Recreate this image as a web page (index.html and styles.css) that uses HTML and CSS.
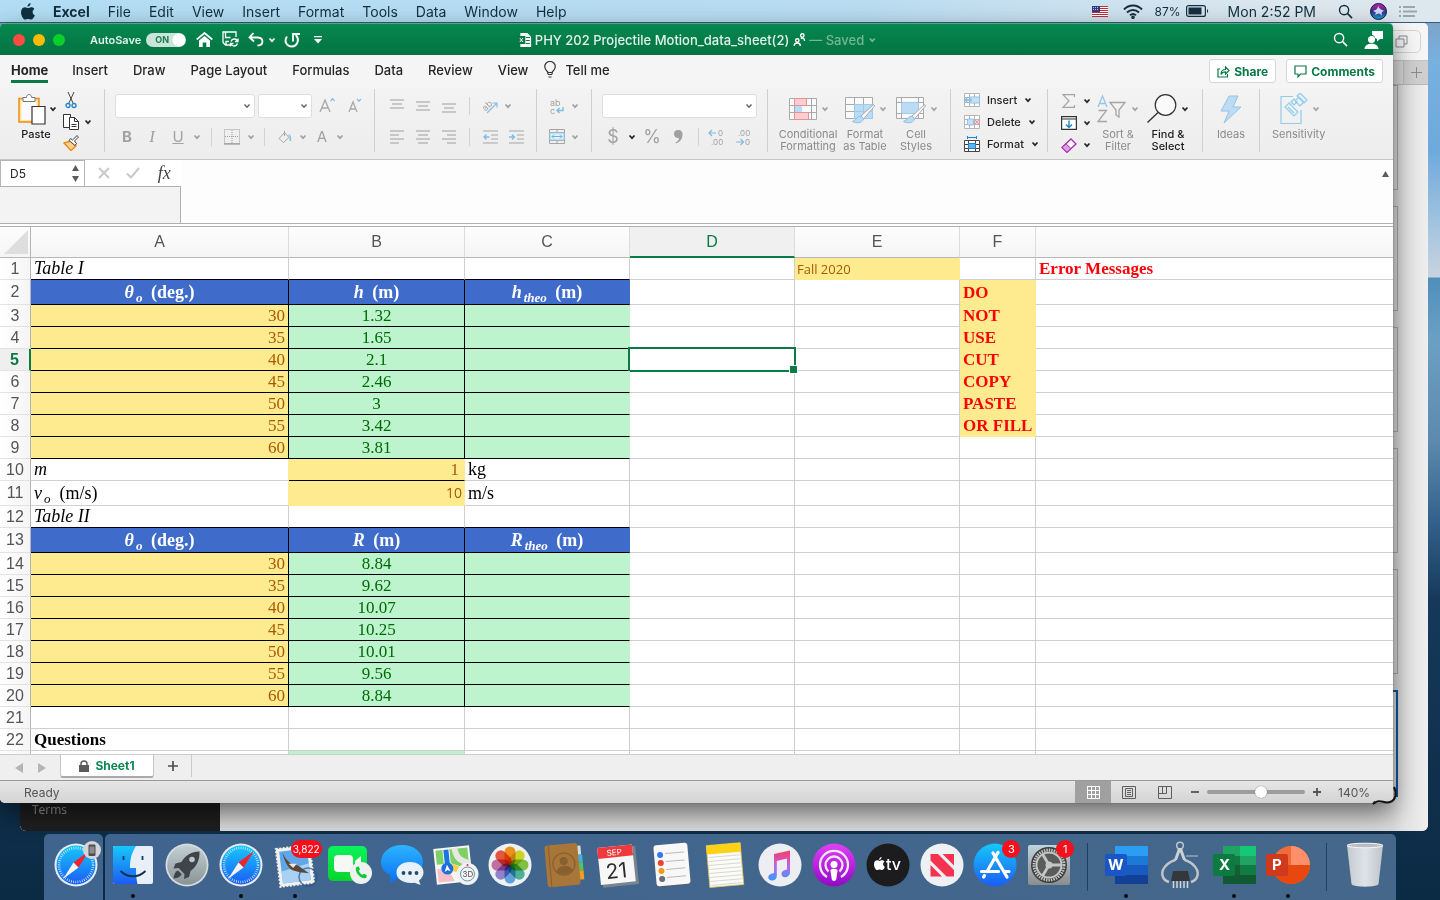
FILE: index.html
```html
<!DOCTYPE html>
<html lang="en">
<head>
<meta charset="utf-8">
<title>PHY 202 Projectile Motion_data_sheet(2)</title>
<link rel="stylesheet" href="styles.css">
</head>
<body>
<svg class="defs" aria-hidden="true">
  <defs>
    <linearGradient id="gBlue" x1="0" y1="0" x2="0" y2="1"><stop offset="0" stop-color="#16c8fb"/><stop offset="1" stop-color="#1b5cf4"/></linearGradient>
    <linearGradient id="gGrey" x1="0" y1="0" x2="0" y2="1"><stop offset="0" stop-color="#c3d0d4"/><stop offset="1" stop-color="#8a9496"/></linearGradient>
    <linearGradient id="gMsg" x1="0" y1="0" x2="0" y2="1"><stop offset="0" stop-color="#2db4ff"/><stop offset="1" stop-color="#0a70f5"/></linearGradient>
    <linearGradient id="gGreen" x1="0" y1="0" x2="0" y2="1"><stop offset="0" stop-color="#0cf25c"/><stop offset="1" stop-color="#07d42c"/></linearGradient>
    <linearGradient id="gPurple" x1="0" y1="0" x2="0" y2="1"><stop offset="0" stop-color="#e040f5"/><stop offset="1" stop-color="#8f0bc4"/></linearGradient>
    <linearGradient id="gMusic" x1="0" y1="0" x2="0" y2="1"><stop offset="0" stop-color="#fb3b63"/><stop offset=".55" stop-color="#b866f0"/><stop offset="1" stop-color="#2f9cfa"/></linearGradient>
    <linearGradient id="gMetal" x1="0" y1="0" x2="0" y2="1"><stop offset="0" stop-color="#bed3dc"/><stop offset="1" stop-color="#8b8d8e"/></linearGradient>
    <linearGradient id="gTrash" x1="0" y1="0" x2="1" y2="0"><stop offset="0" stop-color="#cfd2d6"/><stop offset=".5" stop-color="#eceef0"/><stop offset="1" stop-color="#c9ccd0"/></linearGradient>
    <linearGradient id="gSiri" x1="0" y1="0" x2="0" y2="1"><stop offset="0" stop-color="#d01bb0"/><stop offset=".5" stop-color="#35308f"/><stop offset="1" stop-color="#15a8d8"/></linearGradient>
  </defs>
  <symbol id="chev" viewBox="0 0 8 6"><path d="M1.5 1.5L4 4.2L6.500 1.500" fill="none" stroke="currentColor" stroke-width="1.700"/></symbol>
  <symbol id="apple" viewBox="0 0 14 17"><path d="M9.600 0C9.800 1.800 8.300 3.700 6.500 3.700C6.300 2 7.900.2 9.600 0ZM11.600 8.900c0-1.600 1.100-2.500 1.800-3C12.500 4.500 11.200 4.200 10.200 4.200 8.900 4.200 7.900 5 7.100 5 6.400 5 5.300 4.200 4.200 4.200 1.900 4.200 0 6.100 0 9.300 0 12.700 2.300 16.600 4.300 16.600 5.400 16.600 5.900 15.900 7.200 15.900 8.500 15.900 8.800 16.600 10 16.600c1.700 0 3.200-2.600 3.800-4.400-1.300-.5-2.200-1.700-2.200-3.300Z" fill="currentColor"/></symbol>
  <symbol id="lens" viewBox="0 0 16 16"><circle cx="6.500" cy="6.500" r="4.900" fill="none" stroke="currentColor" stroke-width="1.500"/><path d="M10 10l5 5" stroke="currentColor" stroke-width="1.700"/></symbol>
  <symbol id="al" viewBox="0 0 14 14"><path d="M0 1h14M0 5h9M0 9h14M0 13h9" stroke="currentColor"/></symbol>
  <symbol id="brush" viewBox="0 0 24 22"><path d="M22.500 1.500L10 13l2.500 3L23.500 3Z" fill="#f8f8f8" stroke="#a9a9a9"/><path d="M10 13c-4 0-4 4-8.500 5.500 4 2 9.500 2 11-2.500Z" fill="#bcdcf4" stroke="#8cbde4"/></symbol>
  <symbol id="safari" viewBox="0 0 44 44"><circle cx="22" cy="22" r="21.500" fill="#e8ecef"/><circle cx="22" cy="22" r="19.500" fill="url(#gBlue)"/><circle cx="22" cy="22" r="17" fill="none" stroke="#d9f2ff" stroke-width="2.500" stroke-dasharray=".7 1.500"/><path d="M35 8L24.500 24.500l-5-5Z" fill="#f2222c"/><path d="M9 36L19.500 19.500l5 5Z" fill="#f3f3f3"/></symbol>
</svg>

<header class="menubar">
  <nav class="menus" aria-label="Menu bar">
    <button class="m" aria-label="Apple"><svg width="14" height="17"><use href="#apple"/></svg></button>
    <button class="m app">Excel</button><button class="m">File</button><button class="m">Edit</button><button class="m">View</button><button class="m">Insert</button><button class="m">Format</button><button class="m">Tools</button><button class="m">Data</button><button class="m">Window</button><button class="m">Help</button>
  </nav>
  <div class="tray">
    <svg class="flag" width="16" height="11" viewBox="0 0 16 11"><path d="M0 0h16v11H0z" fill="#fff"/><path d="M0 .5h16M0 2.500h16M0 4.500h16M0 6.500h16M0 8.500h16M0 10.500h16" stroke="#bd2f3f"/><path d="M0 0h8v6H0z" fill="#3b3a78"/><path d="M1 1.500h6M1 3.500h6" stroke="#b9b9dd" stroke-dasharray="1 1"/></svg>
    <svg class="wifi" width="20" height="15" viewBox="0 0 20 15" fill="none" stroke="#17303f" stroke-width="2"><path d="M1 5.500C6 .2 14 .2 19 5.500M4 8.500c3.500-3.500 8.500-3.500 12 0M7 11.300c2-1.800 4-1.800 6 0"/><circle cx="10" cy="13.300" r=".8"/></svg>
    <span class="pct">87%</span>
    <svg class="batt" width="23" height="12" viewBox="0 0 23 12"><rect x=".6" y=".6" width="18.800" height="10.800" rx="2" fill="none" stroke="#17303f" stroke-width="1.200"/><path d="M2.500 2.500h13v7h-13z" fill="#17303f"/><path d="M21 4c1.500.5 1.500 3.500 0 4z" fill="#17303f"/></svg>
    <time class="clock">Mon 2:52 PM</time>
    <button class="t1" aria-label="Search"><svg width="15" height="15"><use href="#lens"/></svg></button>
    <svg class="siri" width="17" height="17" viewBox="0 0 17 17"><circle cx="8.500" cy="8.500" r="8" fill="url(#gSiri)" stroke="#16183c"/><path d="M8 2.500c1 4 5 5 7 5.500-3 .3-4 1-3 5-2-3-3-3.500-7-1 2-3 0-3-2-4C6 7 8 6 8 2.500Z" fill="#e6f4ff" opacity=".85"/></svg>
    <svg class="list" width="19" height="11" viewBox="0 0 19 11"><path d="M0 1h2M0 5.500h2M0 10h2M4 1h12M4 5.500h14M4 10h12" stroke="#99a7b0" stroke-width="1.800"/></svg>
  </div>
</header>

<main class="desktop">
  <section class="back" aria-label="Browser window">
    <div class="back-bar"><span class="pill"><svg width="13" height="13" viewBox="0 0 13 13" fill="none" stroke="#8c8c8c"><path d="M1 4h8v8H1zM4 4V1h8v8H9"/></svg></span></div>
    <div class="back-tabs"><button class="newtab" aria-label="New tab"><svg width="11" height="11" viewBox="0 0 11 11"><path d="M5.500 0v11M0 5.500h11" stroke="#8b8b8b"/></svg></button></div>
    <div class="back-body">
      <div class="side"><a href="#terms">Terms</a></div>
      <div class="cards"><i></i><i></i><i></i><i></i><i></i><i class="on"></i></div>
    </div>
  </section>

  <section class="excel" aria-label="Excel">
    <div class="titlebar">
      <div class="lights"><button aria-label="Close" class="r"></button><button aria-label="Minimize" class="y"></button><button aria-label="Zoom" class="g"></button></div>
      <label class="autosave">AutoSave <span class="sw"><input type="checkbox" checked><span class="on-text">ON</span></span></label>
      <div class="quick">
        <button aria-label="Home"><svg width="17" height="16" viewBox="0 0 17 16"><path d="M.7 7.500L8.500 1l7.800 6.500" fill="none" stroke="#fff" stroke-width="1.700"/><path d="M3 8.500L8.500 4l5.500 4.500V15h-3.700v-4.500H6.700V15H3Z" fill="#fff"/></svg></button>
        <button aria-label="Save"><svg width="17" height="17" viewBox="0 0 17 17" fill="none" stroke="#fff" stroke-width="1.300"><path d="M8 14H3.500L1 11.500V1h13v5M3.500 1v5.500h5M4 14v-3.500h3"/><path d="M9 10.500c1-3 5-3.500 6.500-.5M16 7.500V10.500h-3M15.500 12.500c-1 3-5 3.500-6.500.5M8.500 15.500v-3h3"/></svg></button>
        <button aria-label="Undo"><svg width="16" height="15" viewBox="0 0 16 15" fill="none" stroke="#fff" stroke-width="1.800"><path d="M5.500 1L1.500 5.500l4.500 4M1.500 5.500h8.500c6 0 6 8-.5 8"/></svg></button>
        <button aria-label="Undo list" class="w"><svg width="8" height="6"><use href="#chev"/></svg></button>
        <button aria-label="Repeat"><svg width="16" height="16" viewBox="0 0 16 16" fill="none" stroke="#fff" stroke-width="2"><path d="M3 4.500C-.5 9.500 3 14.500 7.800 14.500c5.500 0 8.200-7 4-11.500"/><path d="M9 9.500V2h7" stroke-width="1.800"/><path d="M7 5.500v5" stroke-width="0"/></svg></button>
        <button aria-label="Customize toolbar"><svg width="8" height="8" viewBox="0 0 8 8"><path d="M0 .7h8" stroke="#fff" stroke-width="1.300"/><path d="M0 3h8L4 7.500Z" fill="#fff"/></svg></button>
      </div>
      <div class="doc">
        <svg width="14" height="14" viewBox="0 0 14 14"><path d="M3 0h7l4 4v10H3z" fill="#fff"/><path d="M8.500 4.500h4M8.500 7.500h4M8.500 10.500h4" stroke="#0a7a45"/><path d="M0 3h8v8H0z" fill="#0a7a45"/><path d="M2.500 5l3.200 4M5.700 5L2.500 9" stroke="#fff"/></svg>
        <span>PHY 202 Projectile Motion_data_sheet(2)</span>
        <svg width="12" height="13" viewBox="0 0 12 13" fill="none" stroke="#fff" stroke-width="1.400"><circle cx="4" cy="7.500" r="1.700"/><path d="M.8 13c0-4 6.200-4 6.200 0"/><circle cx="9" cy="2.500" r="1.700"/><path d="M7.500 5.500c2-1 3.800 0 3.800 2.500"/></svg>
        <span class="saved">— Saved</span><svg class="saved" width="8" height="6"><use href="#chev"/></svg>
      </div>
      <div class="title-right">
        <button aria-label="Search"><svg width="15" height="15"><use href="#lens"/></svg></button>
        <button aria-label="Account"><svg width="19" height="18" viewBox="0 0 19 18" fill="#fff"><circle cx="7.500" cy="8.500" r="3.500"/><path d="M.5 18c0-7 14-7 14 0ZM8 0h11v8h-3l-3 2.500V8l-2-1C11 5 9 4 8 4Z"/></svg></button>
      </div>
    </div>

    <div class="tabs">
      <button class="tab sel">Home</button><button class="tab">Insert</button><button class="tab">Draw</button><button class="tab">Page Layout</button><button class="tab">Formulas</button><button class="tab">Data</button><button class="tab">Review</button><button class="tab">View</button>
      <button class="tab tell"><svg width="12" height="17" viewBox="0 0 12 17" fill="none" stroke="#333" stroke-width="1.200"><path d="M3.800 13v-2C2 9 .7 8 .7 5.500a5.300 5 0 0 1 10.600 0C11.300 8 10 9 8.200 11v2M3.800 11.500h4.400M3.800 13.500h4.400M4.500 16h3"/></svg>Tell me</button>
      <span class="grow"></span>
      <button class="act share"><svg width="13" height="13" viewBox="0 0 13 13" fill="none" stroke="#087a45" stroke-width="1.200"><path d="M3 4H1v8h9.500V9M4 9.500C4 6 6 4.500 8.500 4.500V2L12 5.500 8.500 9V6.800C6.500 6.800 5 7.500 4 9.500Z"/></svg>Share</button>
      <button class="act comm"><svg width="13" height="13" viewBox="0 0 13 13" fill="none" stroke="#087a45" stroke-width="1.200"><path d="M1 1h11v8H6.500L4 12V9H1Z"/></svg>Comments</button>
    </div>

    <div class="ribbon">
      <div class="grp g1">
        <button class="big dark"><span class="pic"><svg width="28" height="32" viewBox="0 0 28 32"><path d="M1 5.500h20V29H1z" fill="#fde3a0" stroke="#f08c10" stroke-width="1.500"/><path d="M3.500 8h15v19h-15z" fill="#fafafa"/><path d="M5 8.500v-4h3.500c0-4 5-4 5 0H17v4Z" fill="#fff" stroke="#777"/><path d="M14 13.500h13V31H14z" fill="#fff" stroke="#333" stroke-width="1.200"/></svg><svg width="8" height="6"><use href="#chev"/></svg></span>Paste</button>
        <div class="stack">
          <button aria-label="Cut"><svg width="12" height="17" viewBox="0 0 12 17" fill="none"><path d="M3 0l5 11M9 0L4 11" stroke="#444"/><circle cx="3" cy="13.500" r="2" stroke="#1a86d0" stroke-width="1.300"/><circle cx="9" cy="13.500" r="2" stroke="#1a86d0" stroke-width="1.300"/></svg></button>
          <button aria-label="Copy" class="dark cp"><svg width="16" height="16" viewBox="0 0 16 16" fill="#fff" stroke="#333"><path d="M.5.500h7v13h-7z"/><path d="M6.500 3.500h5l4 4v8h-9zM11.500 3.500v4h4M8.500 10.500h5M8.500 12.500h5"/></svg><svg width="8" height="6"><use href="#chev"/></svg></button>
          <button aria-label="Format painter"><svg width="16" height="16" viewBox="0 0 16 16"><path d="M1 8l7-2 5 5-5 4.500Z" fill="#fbd28b" stroke="#ef8a12" stroke-width="1.400"/><path d="M6 5.500l6 5 1.500-2-2-2.500L15.500 2 14 .6 9.500 5 7.500 3.500Z" fill="#fff" stroke="#444"/></svg></button>
        </div>
      </div>
      <div class="grp g2">
        <div class="row fonts"><select aria-label="Font" disabled><option></option></select><select aria-label="Font size" disabled><option></option></select>
          <button aria-label="Increase font size"><svg width="17" height="17" viewBox="0 0 17 17" fill="none"><path d="M1 15L6 3l5 12M3 11h6" stroke="#a8a8a8" stroke-width="1.300"/><path d="M11.500 4l2-2.200 2 2.200" stroke="#86bfe4" stroke-width="1.300"/></svg></button>
          <button aria-label="Decrease font size"><svg width="17" height="17" viewBox="0 0 17 17" fill="none"><path d="M3 15L7 5l4 10M4.500 12h5" stroke="#a8a8a8" stroke-width="1.300"/><path d="M11 2l2 2.200L15 2" stroke="#86bfe4" stroke-width="1.300"/></svg></button></div>
        <div class="row style">
          <button class="b">B</button><button class="i">I</button><button class="u">U</button><svg width="8" height="6"><use href="#chev"/></svg><span class="sep"></span>
          <button aria-label="Borders"><svg width="16" height="16" viewBox="0 0 16 16" fill="none" stroke="#9d9d9d"><path d="M.5.500h15v14H.5zM8 1v14M1 7.500h14" stroke-dasharray="1 1"/><path d="M0 15h16" stroke="#888"/></svg></button><svg width="8" height="6"><use href="#chev"/></svg><span class="sep"></span>
          <button aria-label="Fill colour"><svg width="14" height="14" viewBox="0 0 14 14" fill="none" stroke="#a8a8a8"><path d="M1 8.500l5.500-6 4.500 5L5.500 12.500ZM6.500 6V.8"/><path d="M10.500 5c2 0 2 3 1.800 6" stroke="#86bfe4" stroke-width="1.600"/></svg></button><svg width="8" height="6"><use href="#chev"/></svg>
          <button class="fc">A</button><svg width="8" height="6"><use href="#chev"/></svg>
        </div>
      </div>
      <div class="grp g3">
        <div class="row al"><svg width="14" height="14" viewBox="0 0 14 14"><path d="M0 1h14M2 5h10M0 9h14" stroke="currentColor"/></svg><svg width="14" height="14" viewBox="0 0 14 14"><path d="M0 3h14M2 7h10M0 11h14" stroke="currentColor"/></svg><svg width="14" height="14" viewBox="0 0 14 14"><path d="M0 5h14M2 9h10M0 13h14" stroke="currentColor"/></svg><span class="sep"></span>
          <svg width="18" height="18" viewBox="0 0 18 18"><text x="1" y="12" font-size="9" fill="#a2a2a2" transform="rotate(-45 6 9)">ab</text><path d="M6 16L16 6M11.500 6H16v4.500" fill="none" stroke="#86bfe4" stroke-width="1.200"/></svg><svg class="start" width="8" height="6"><use href="#chev"/></svg></div>
        <div class="row al"><svg width="14" height="14"><use href="#al"/></svg><svg width="14" height="14" viewBox="0 0 14 14"><path d="M0 1h14M2 5h10M0 9h14M2 13h10" stroke="currentColor"/></svg><svg width="14" height="14" viewBox="0 0 14 14"><path d="M0 1h14M5 5h9M0 9h14M5 13h9" stroke="currentColor"/></svg><span class="sep"></span>
          <svg width="15" height="14" viewBox="0 0 15 14" fill="none"><path d="M0 1h15M8 5h7M8 9h7M0 13h15" stroke="#a5a5a5"/><path d="M6.500 7H1M3.500 4.500L1 7l2.500 2.500" stroke="#7ebbe3" stroke-width="1.300"/></svg><svg width="15" height="14" viewBox="0 0 15 14" fill="none"><path d="M0 1h15M8 5h7M8 9h7M0 13h15" stroke="#a5a5a5"/><path d="M0 7h5.500M3 4.500L5.500 7 3 9.500" stroke="#7ebbe3" stroke-width="1.300"/></svg></div>
      </div>
      <div class="grp g4">
        <div class="row"><svg width="16" height="22" viewBox="0 0 16 22"><text x="1" y="11" font-size="9" fill="#a2a2a2">ab</text><text x="1" y="19" font-size="9" fill="#a2a2a2" class="tight">c</text><path d="M14 12v3.500H8M10.500 13L8 15.500l2.500 2.500" fill="none" stroke="#7ebbe3" stroke-width="1.300"/></svg><svg width="8" height="6"><use href="#chev"/></svg></div>
        <div class="row"><svg width="16" height="15" viewBox="0 0 16 15" fill="none"><path d="M.5.500h15v14H.5zM.5 3.500h15M.5 11.500h15M8 .5v3M8 11.500v3" stroke="#a5a5a5"/><path d="M1 4h14v7H1z" fill="#e2f1fb" stroke="#9acbe9"/><path d="M3 7.500h10M5 5.500l-2 2 2 2M11 5.500l2 2-2 2" stroke="#6db3df"/></svg><svg width="8" height="6"><use href="#chev"/></svg></div>
      </div>
      <div class="grp g5">
        <div class="row"><select aria-label="Number format" disabled><option></option></select></div>
        <div class="row num"><button>$</button><svg class="dk" width="8" height="6"><use href="#chev"/></svg><button>%</button><button class="comma" aria-label="Comma style"><svg width="9" height="14" viewBox="0 0 9 14"><path d="M4 0a4 4 0 0 1 4.500 4.500C8.500 9 6 12 2 13.500l-.5-1C4 11 5 9.500 5 8 2 8.500 0 6.500 0 4A4 4 0 0 1 4 0Z" fill="#a0a0a0"/></svg></button><span class="sep"></span>
          <svg width="18" height="22" viewBox="0 0 18 22"><text x="10" y="10" font-size="8" fill="#a0a0a0">0</text><text x="3" y="19" font-size="8" fill="#a0a0a0">.00</text><path d="M8 7H1M4 4L1 7l3 3" fill="none" stroke="#7ebbe3" stroke-width="1.200"/></svg>
          <svg width="18" height="22" viewBox="0 0 18 22"><text x="3" y="10" font-size="8" fill="#a0a0a0">.00</text><text x="10" y="19" font-size="8" fill="#a0a0a0">0</text><path d="M1 16h7M5.500 13l3 3-3 3" fill="none" stroke="#7ebbe3" stroke-width="1.200"/></svg></div>
      </div>
      <div class="grp g6">
        <button class="big"><span class="pic"><svg width="30" height="28" viewBox="0 0 30 28"><path d="M1.500 3.500h27v21h-27zM1.500 10.500h27M1.500 17.500h27M6.500 3.500v21M23.500 3.500v21" fill="#fafafa" stroke="#a9a9a9"/><path d="M6.500 3.500h12v7h-12zM6.500 17.500h14v7h-14z" fill="#f9cfd1" stroke="#ee8f93"/><path d="M7 11h7v6H7z" fill="#bcdcf4"/></svg><svg width="8" height="6"><use href="#chev"/></svg></span>Conditional<br>Formatting</button>
        <button class="big"><span class="pic"><svg width="32" height="30" viewBox="0 0 32 30"><path d="M1.500 3.500h27v21h-27zM1.500 10.500h27M1.500 17.500h27M10.500 3.500v21M19.500 3.500v21" fill="#fafafa" stroke="#a9a9a9"/><path d="M10.500 10.500h18v14h-18z" fill="#bcdcf4" stroke="#9ccbec"/><path d="M10.500 17.500h18M19.500 10v14" stroke="#9ccbec"/><use href="#brush" x="7" y="9" width="24" height="22"/></svg><svg width="8" height="6"><use href="#chev"/></svg></span>Format<br>as Table</button>
        <button class="big"><span class="pic"><svg width="32" height="30" viewBox="0 0 32 30"><path d="M1.500 3.500h27v21h-27zM1.500 8.500h27M1.500 19.500h27M6.500 3.500v21M23.500 3.500v21" fill="#fafafa" stroke="#a9a9a9"/><path d="M6.500 8.500h17v11h-17z" fill="#bcdcf4" stroke="#9ccbec"/><use href="#brush" x="7" y="9" width="24" height="22"/></svg><svg width="8" height="6"><use href="#chev"/></svg></span>Cell<br>Styles</button>
      </div>
      <div class="grp g7">
        <button class="line"><svg width="16" height="14" viewBox="0 0 16 14"><path d="M.5.500h15v13H.5zM.5 4.500h15M.5 9.500h15M5.500.5v13M10.500.5v13" fill="#fff" stroke="#b5b5b5"/><path d="M6 4h9.500v6H6z" fill="#c5e1f5" stroke="#8fc3e8"/><path d="M8 7H1M4 4L1 7l3 3" fill="none" stroke="#7ebbe3" stroke-width="1.300"/></svg>Insert<svg width="8" height="6"><use href="#chev"/></svg></button>
        <button class="line"><svg width="16" height="14" viewBox="0 0 16 14"><path d="M.5.500h15v13H.5zM.5 4.500h15M.5 9.500h15M5.500.5v13M10.500.5v13" fill="#fff" stroke="#b5b5b5"/><path d="M3.500 4h6v6h-6z" fill="#c5e1f5" stroke="#8fc3e8"/><path d="M10.500 4.500l5 5M15.500 4.500l-5 5" stroke="#f09a9e" stroke-width="1.300"/></svg>Delete<svg width="8" height="6"><use href="#chev"/></svg></button>
        <button class="line"><svg width="16" height="16" viewBox="0 0 16 16"><path d="M.5 4.500h15v11H.5zM.5 8.500h15M.5 12.500h15M4.500 4.500v11M11.500 4.500v11" fill="#fff" stroke="#444"/><path d="M4.500 7.500h7v5h-7z" fill="#5db4ef" stroke="#1a86d0"/><path d="M3.500 1.500h9M3.500 0v3M12.500 0v3" stroke="#1a86d0"/></svg>Format<svg width="8" height="6"><use href="#chev"/></svg></button>
      </div>
      <div class="grp g8">
        <div class="stack two">
          <button aria-label="AutoSum"><svg width="16" height="14" viewBox="0 0 16 14"><path d="M13.500 3V.7H2L8 7l-6 6.300h11.500V11" fill="none" stroke="#a5a5a5" stroke-width="1.200"/></svg><svg width="8" height="6"><use href="#chev"/></svg></button>
          <button aria-label="Fill"><svg width="16" height="14" viewBox="0 0 16 14"><path d="M.6.600h14.800v12.800H.6zM.6 3h14.800" fill="#fff" stroke="#333" stroke-width="1.200"/><path d="M8 4.500V11M5 8.500l3 3 3-3" fill="none" stroke="#1a86d0" stroke-width="1.400"/></svg><svg width="8" height="6"><use href="#chev"/></svg></button>
          <button aria-label="Clear"><svg width="16" height="15" viewBox="0 0 16 15"><path d="M1 9.500L10 1l5 5-9 8.300Z" fill="#fff" stroke="#a42cae" stroke-width="1.300"/><path d="M1 9.500L5 5.800l5 4.800-4 3.700Z" fill="#dc9fe0" stroke="#a42cae"/></svg><svg width="8" height="6"><use href="#chev"/></svg></button>
        </div>
        <button class="big"><span class="pic"><svg width="30" height="30" viewBox="0 0 30 30" fill="none"><path d="M1 13L5.500 2 10 13M2.700 9.500h5.700" stroke="#94c8ea" stroke-width="1.300"/><path d="M1.500 16.500h8l-8.500 11h9" stroke="#a5a5a5" stroke-width="1.300"/><path d="M13 8.500h15l-6 7.500v7l-3-2v-5Z" stroke="#a5a5a5" stroke-width="1.300"/></svg><svg width="8" height="6"><use href="#chev"/></svg></span>Sort &amp;<br>Filter</button>
        <button class="big dark"><span class="pic"><svg width="30" height="30" viewBox="0 0 30 30"><circle cx="18.500" cy="11" r="10.300" fill="#fafafa" stroke="#333" stroke-width="1.200"/><path d="M11 18.500L.5 28.500" stroke="#333" stroke-width="1.400"/></svg><svg width="8" height="6"><use href="#chev"/></svg></span>Find &amp;<br>Select</button>
      </div>
      <div class="grp g9"><button class="big"><span class="pic"><svg width="24" height="29" viewBox="0 0 24 29"><path d="M10 1h9l-5 11h8L5 28l5-12H2Z" fill="#bcdcf4" stroke="#94c2e8"/></svg></span>Ideas</button></div>
      <div class="grp g10"><button class="big"><span class="pic"><svg width="28" height="32" viewBox="0 0 28 32" fill="none" stroke="#93cbe9" stroke-width="1.200"><path d="M13 3.500H1v27h20V17"/><path d="M5 14l4-4 9 9-4 4ZM8 14l6 6M15 8l5 5 4-4-5-5ZM17 3l3-3 7 7-3 3ZM11 9l3 3 3-3-3-3Z" fill="#e5f3fb"/></svg><svg width="8" height="6"><use href="#chev"/></svg></span>Sensitivity</button></div>
    </div>

    <div class="formula">
      <div class="fleft">
        <div class="frow">
          <div class="namebox"><input value="D5" aria-label="Name box"><svg width="7" height="17" viewBox="0 0 7 17"><path d="M0 6L3.500 0 7 6ZM0 11h7l-3.500 6Z" fill="#5c5c5c"/></svg></div>
          <button aria-label="Cancel"><svg width="12" height="12" viewBox="0 0 12 12"><path d="M1 1l10 10M11 1L1 11" stroke="#c9c9c9" stroke-width="2"/></svg></button>
          <button aria-label="Enter"><svg width="14" height="12" viewBox="0 0 14 12"><path d="M1 6.500L5 10.500 13 1" fill="none" stroke="#c9c9c9" stroke-width="2"/></svg></button>
          <button class="fx">fx</button>
        </div>
        <div class="fblank"></div>
      </div>
      <textarea aria-label="Formula"></textarea>
      <button class="fold" aria-label="Collapse formula bar"><svg width="7" height="6" viewBox="0 0 7 6"><path d="M0 6L3.500 0 7 6Z" fill="#5c5c5c"/></svg></button>
    </div>

    <div class="sheet">
      <table>
        <colgroup><col class="ch"><col class="ca"><col class="cb"><col class="cc"><col class="cc"><col class="cc"><col class="cf"><col></colgroup>
        <thead><tr><th><svg width="24" height="24" viewBox="0 0 24 24"><path d="M24 0v24H0Z" fill="#dedede"/></svg></th><th>A</th><th>B</th><th>C</th><th class="cur">D</th><th>E</th><th>F</th><th></th></tr></thead>
        <tbody>
          <tr class="over"><th>1</th><td class="it">Table I</td><td></td><td></td><td></td><td class="fall">Fall 2020</td><td></td><td class="err">Error Messages</td></tr>
          <tr class="tall head"><th>2</th><td><em>θ<sub>o</sub></em> (deg.)</td><td><em>h</em> (m)</td><td><em>h<sub>theo</sub></em> (m)</td><td></td><td></td><td class="warn">DO</td><td></td></tr>
          <tr class="data"><th>3</th><td>30</td><td>1.32</td><td></td><td></td><td></td><td class="warn">NOT</td><td></td></tr>
          <tr class="data"><th>4</th><td>35</td><td>1.65</td><td></td><td></td><td></td><td class="warn">USE</td><td></td></tr>
          <tr class="data"><th class="cur">5</th><td>40</td><td>2.1</td><td></td><td class="active"></td><td></td><td class="warn">CUT</td><td></td></tr>
          <tr class="data"><th>6</th><td>45</td><td>2.46</td><td></td><td></td><td></td><td class="warn">COPY</td><td></td></tr>
          <tr class="data"><th>7</th><td>50</td><td>3</td><td></td><td></td><td></td><td class="warn">PASTE</td><td></td></tr>
          <tr class="data"><th>8</th><td>55</td><td>3.42</td><td></td><td></td><td></td><td class="warn">OR FILL</td><td></td></tr>
          <tr class="data"><th>9</th><td>60</td><td>3.81</td><td></td><td></td><td></td><td></td><td></td></tr>
          <tr><th>10</th><td class="it nr">m</td><td class="inp line-b one">1</td><td class="unit">kg</td><td></td><td></td><td></td><td></td></tr>
          <tr class="tall"><th>11</th><td class="unit nr"><em>v<sub>o</sub></em>&nbsp; (m/s)</td><td class="inp sans">10</td><td class="unit">m/s</td><td></td><td></td><td></td><td></td></tr>
          <tr class="over"><th>12</th><td class="it">Table II</td><td></td><td></td><td></td><td></td><td></td><td></td></tr>
          <tr class="tall head"><th>13</th><td><em>θ<sub>o</sub></em> (deg.)</td><td><em>R</em> (m)</td><td><em>R<sub>theo</sub></em> (m)</td><td></td><td></td><td></td><td></td></tr>
          <tr class="data"><th>14</th><td>30</td><td>8.84</td><td></td><td></td><td></td><td></td><td></td></tr>
          <tr class="data"><th>15</th><td>35</td><td>9.62</td><td></td><td></td><td></td><td></td><td></td></tr>
          <tr class="data"><th>16</th><td>40</td><td>10.07</td><td></td><td></td><td></td><td></td><td></td></tr>
          <tr class="data"><th>17</th><td>45</td><td>10.25</td><td></td><td></td><td></td><td></td><td></td></tr>
          <tr class="data"><th>18</th><td>50</td><td>10.01</td><td></td><td></td><td></td><td></td><td></td></tr>
          <tr class="data"><th>19</th><td>55</td><td>9.56</td><td></td><td></td><td></td><td></td><td></td></tr>
          <tr class="data"><th>20</th><td>60</td><td>8.84</td><td></td><td></td><td></td><td></td><td></td></tr>
          <tr><th>21</th><td></td><td></td><td></td><td></td><td></td><td></td><td></td></tr>
          <tr><th>22</th><td class="q">Questions</td><td></td><td></td><td></td><td></td><td></td><td></td></tr>
          <tr><th></th><td></td><td class="ans"></td><td></td><td></td><td></td><td></td><td></td></tr>
        </tbody>
      </table>
    </div>

    <div class="sheetbar">
      <button class="arr" aria-label="Previous sheet"><svg width="8" height="10" viewBox="0 0 8 10"><path d="M8 0v10L0 5Z" fill="#b4b4b4"/></svg></button>
      <button class="arr" aria-label="Next sheet"><svg width="8" height="10" viewBox="0 0 8 10"><path d="M0 0v10l8-5Z" fill="#b4b4b4"/></svg></button>
      <button class="stab"><svg width="10" height="12" viewBox="0 0 10 12"><path d="M0 5h10v7H0z" fill="#5c5c5c"/><path d="M2 5.500V4c0-4 6-4 6 0v1.500" fill="none" stroke="#5c5c5c" stroke-width="1.500"/></svg>Sheet1</button>
      <button class="add" aria-label="New sheet"><svg width="10" height="10" viewBox="0 0 10 10"><path d="M5 0v10M0 5h10" stroke="#4e4e4e" stroke-width="1.700"/></svg></button>
    </div>
    <footer class="status">
      <span>Ready</span><span class="grow"></span>
      <button class="view sel" aria-label="Normal view"><svg width="13" height="13" viewBox="0 0 13 13"><path d="M0 0h13v13H0z" fill="#fff"/><path d="M1 1h3v3H1zM5 1h3v3H5zM9 1h3v3H9zM1 5h3v3H1zM5 5h3v3H5zM9 5h3v3H9zM1 9h3v3H1zM5 9h3v3H5zM9 9h3v3H9z" fill="#9f9f9f"/></svg></button>
      <button class="view" aria-label="Page layout view"><svg width="14" height="13" viewBox="0 0 14 13" fill="none" stroke="#5f5f5f"><path d="M.5.500h13v12H.5zM3.500 2.500h7v8h-7zM5 4.500h4M5 6.500h4M5 8.500h4"/></svg></button>
      <button class="view" aria-label="Page break view"><svg width="14" height="13" viewBox="0 0 14 13" fill="none" stroke="#5f5f5f"><path d="M.5.500h13v12H.5zM.5 7.500h8v-7M4.500.5v7"/></svg></button>
      <button class="zb" aria-label="Zoom out"><svg width="8" height="8" viewBox="0 0 8 8"><path d="M0 4h8" stroke="#555" stroke-width="1.800"/></svg></button>
      <input type="range" min="0" max="100" value="56" aria-label="Zoom">
      <button class="zb" aria-label="Zoom in"><svg width="8" height="8" viewBox="0 0 8 8"><path d="M0 4h8M4 0v8" stroke="#555" stroke-width="1.800"/></svg></button>
      <span class="zoom">140%</span>
    </footer>
  </section>
  <svg class="grip" width="26" height="20" viewBox="0 0 26 20"><path d="M22 1c3 6 2 13-4 15-6 2-9-3-14 0l-3 2 2-2.500" fill="none" stroke="#111" stroke-width="2"/></svg>
</main>

<nav class="dock" aria-label="Dock">
  <div class="shelf handoff"><button class="d" aria-label="Safari from iPhone"><svg width="56" height="48" viewBox="0 0 56 48"><use href="#safari" x="8" y="2" width="44" height="44"/><circle cx="46" cy="9" r="9" fill="#d4d6d9"/><rect x="42.500" y="3.500" width="7" height="11.500" rx="1.200" fill="#4e4e50"/><path d="M43.500 5.500h5v7h-5z" fill="#8b8b8d"/></svg></button></div>
  <div class="shelf main">
    <div class="apps a18">
      <button class="d run" aria-label="Finder"><svg width="44" height="44" viewBox="0 0 44 44"><rect x="2" y="3" width="40" height="38" rx="2" fill="#e9eff8"/><path d="M4 3h21c-5 8-6 14-6 22h6c0 6 .3 11 1.500 16H4a2 2 0 0 1-2-2V5a2 2 0 0 1 2-2Z" fill="url(#gBlue)"/><path d="M12.500 13v4M31.500 13v4" stroke="#173a5c" stroke-width="1.800"/><path d="M9.500 28c7 7 18 7 25 0" fill="none" stroke="#12304f" stroke-width="1.800"/></svg></button>
      <button class="d" aria-label="Launchpad"><svg width="44" height="44" viewBox="0 0 44 44"><circle cx="22" cy="22" r="21.500" fill="#d9dcdc"/><circle cx="22" cy="22" r="19.800" fill="url(#gGrey)"/><path d="M34.500 8.500C26 8.500 20 13 16.500 19l-6 1.500-2 5 5-.5 6 6-.5 5 5-2 1.500-6C31 24.500 35 17 34.500 8.500Z" fill="#3e444a"/><circle cx="27" cy="16.500" r="2.800" fill="#bcc6c9"/><path d="M13 27.500c-3 1-4 4-4.500 8 4-.5 7-1.500 8-4.500Z" fill="#3e444a"/></svg></button>
      <button class="d run" aria-label="Safari"><svg width="44" height="44"><use href="#safari"/></svg></button>
      <button class="d run" aria-label="Mail"><svg width="46" height="46" viewBox="0 0 46 46"><g transform="rotate(-7 22 24)"><rect x="6" y="5" width="34" height="38" fill="#f1f1ee" stroke="#f1f1ee" stroke-width="2" stroke-dasharray="2 1.500"/><rect x="9" y="8" width="28" height="32" fill="#5fa7e8"/><path d="M9 28l28-5v17H9Z" fill="#a9d1f3"/><path d="M12 9c2 7 5 10 8 13l6 2 10 9-9-2-7-3c-3-1-7-9-8-19Z" fill="#5f4632"/><path d="M17 21l8 1-4 4Z" fill="#f0e8dc"/></g><circle cx="36" cy="35" r="9" fill="none" stroke="#2c5583" stroke-width="1.500" opacity=".7"/></svg><span class="badge wide">3,822</span></button>
      <button class="d" aria-label="FaceTime"><svg width="46" height="44" viewBox="0 0 46 44"><rect x="2" y="3" width="39" height="35" rx="5" fill="url(#gGreen)"/><rect x="8" y="12" width="19" height="17" rx="4" fill="#f5f8f5"/><path d="M29 18l6-5v14l-6-4Z" fill="#f5f8f5"/><circle cx="35" cy="30" r="11" fill="#eef1ef"/><path d="M30 24.500c-1.500 5 5 12 10 10.500l1-2.500-3-1.800-1.700 1c-2-1-3-2.500-3.500-4l1.200-1.400-1.500-3Z" fill="#0fc83b"/></svg></button>
      <button class="d" aria-label="Messages"><svg width="44" height="44" viewBox="0 0 44 44"><path d="M22 2c12 0 21 7.500 21 17S34 36 22 36c-2.500 0-4 0-6-.8-2 2.500-4 4.300-7 4.800 1.500-2.500 2-5 1.500-7.500C4.500 29.500 1 25 1 19 1 9.500 10 2 22 2Z" fill="url(#gMsg)"/><path d="M30 19c8 0 13.500 4.500 13.500 10.500 0 3.500-2 6-4.500 8l1.500 4.500-6-2.300c-12 1.300-18-4.200-18-10.200S22 19 30 19Z" fill="#e9f1f8"/><g fill="#22486e"><circle cx="23.500" cy="30" r="1.900"/><circle cx="30" cy="30" r="1.900"/><circle cx="36.500" cy="30" r="1.900"/></g></svg></button>
      <button class="d" aria-label="Maps"><svg width="46" height="44" viewBox="0 0 46 44"><g transform="rotate(-6 20 22)"><path d="M2 4h36v36H2z" fill="#f6f6f2"/><path d="M4 6h7v14H4z" fill="#7fd069"/><path d="M18 6h18v22L18 20Z" fill="#7fd069"/><path d="M23 5c1 11 5 14 14 17" fill="none" stroke="#e8e8e3" stroke-width="6"/><path d="M4 24l12 4 4 10H4Z" fill="#f6bfc7"/><path d="M12 6h5v18h-5z" fill="#1976e2"/><path d="M17 20l20 9-3 4-18-6Z" fill="#f9cf4b"/><circle cx="14" cy="25" r="6" fill="#1a70df"/><path d="M14 21l3 7-3-1.500-3 1.500Z" fill="#fff"/></g><circle cx="34.500" cy="31" r="11" fill="#f1f2f3"/><circle cx="34.500" cy="31" r="7" fill="none" stroke="#6c97b1"/><text x="29.500" y="34" font-size="8" fill="#555">3D</text><circle cx="34.500" cy="22" r="1" fill="#e8322c"/></svg></button>
      <button class="d" aria-label="Photos"><svg width="44" height="44" viewBox="0 0 44 44"><circle cx="22" cy="22" r="21.500" fill="#eef1f2"/><g class="petals"><rect x="16.500" y="3.500" width="11" height="18.500" rx="5.500" fill="#f89b1c"/><rect x="16.500" y="3.500" width="11" height="18.500" rx="5.500" fill="#dbe028" transform="rotate(45 22 22)"/><rect x="16.500" y="3.500" width="11" height="18.500" rx="5.500" fill="#8bcb46" transform="rotate(90 22 22)"/><rect x="16.500" y="3.500" width="11" height="18.500" rx="5.500" fill="#52b9a5" transform="rotate(135 22 22)"/><rect x="16.500" y="3.500" width="11" height="18.500" rx="5.500" fill="#66abe8" transform="rotate(180 22 22)"/><rect x="16.500" y="3.500" width="11" height="18.500" rx="5.500" fill="#9c8ad4" transform="rotate(225 22 22)"/><rect x="16.500" y="3.500" width="11" height="18.500" rx="5.500" fill="#cf74ad" transform="rotate(270 22 22)"/><rect x="16.500" y="3.500" width="11" height="18.500" rx="5.500" fill="#f45c42" transform="rotate(315 22 22)"/></g></svg></button>
      <button class="d" aria-label="Contacts"><svg width="44" height="46" viewBox="0 0 44 46"><g transform="rotate(-5 22 23)"><path d="M34 5h6v9h-6z" fill="#d9dee0"/><path d="M35 14h6v8h-6z" fill="#3fb2e0"/><path d="M35 22h6v8h-6z" fill="#52c463"/><path d="M35 30h6v9h-6z" fill="#ef9e20"/><rect x="4" y="2" width="33" height="42" rx="3" fill="#a9763a"/><path d="M8 2v42" stroke="#8c5d29"/><circle cx="22" cy="22" r="11" fill="none" stroke="#87602f" stroke-width="1.300"/><circle cx="22" cy="19" r="4" fill="#87602f"/><path d="M14 29c2-7 14-7 16 0-4 4-12 4-16 0Z" fill="#87602f"/></g></svg></button>
      <button class="d" aria-label="Calendar"><svg width="44" height="46" viewBox="0 0 44 46"><g transform="rotate(-6 22 23)"><path d="M5 6h36v38H5z" fill="#76858f"/><path d="M3 4h35v37H3z" fill="#f7f7f7"/><path d="M3 4h35v11H3z" fill="#ef3a3d"/><text x="12" y="13" font-size="8" fill="#fff">SEP</text><text x="9" y="36" font-size="21" fill="#2c2c2c">21</text></g></svg></button>
      <button class="d" aria-label="Reminders"><svg width="44" height="46" viewBox="0 0 44 46"><g transform="rotate(-5 22 23)"><rect x="5" y="3" width="34" height="41" rx="3" fill="#54606b"/><rect x="5" y="2" width="34" height="41" rx="3" fill="#f8f8f8"/><path d="M16 11h19M16 19h19M16 27h19M16 35h19" stroke="#bababa"/><circle cx="11" cy="12" r="3" fill="#3478f6"/><circle cx="11" cy="20" r="3" fill="#eb4237"/><circle cx="11" cy="28" r="3" fill="#f59a1f"/><circle cx="11" cy="36" r="3" fill="#666d74"/></g></svg></button>
      <button class="d" aria-label="Notes"><svg width="44" height="46" viewBox="0 0 44 46"><g transform="rotate(-5 22 23)"><path d="M4 2h34v42H4z" fill="#fbfbf7" stroke="#dcc253" stroke-width=".8"/><path d="M4 2h34v9H4z" fill="#fcd116"/><path d="M5 14h32M5 18h32M5 22h32M5 26h32M5 30h32M5 34h32M5 38h32M5 42h32" stroke="#d6d8d8"/></g></svg></button>
      <button class="d" aria-label="Music"><svg width="44" height="44" viewBox="0 0 44 44"><circle cx="22" cy="22" r="21.500" fill="#eceef2"/><path d="M16 11l16-3.500v22c0 5.500-8.500 6.500-8.500 1.500 0-3.500 3.500-3.800 5.500-4.500V15.500L18.800 18v15c0 5.500-8.500 6-8.500 1.500 0-3.500 3.500-4 5.700-4.500Z" fill="url(#gMusic)"/></svg></button>
      <button class="d" aria-label="Podcasts"><svg width="44" height="44" viewBox="0 0 44 44"><circle cx="22" cy="22" r="21.500" fill="url(#gPurple)"/><g fill="none" stroke="#f6e6fb" stroke-width="2.300"><path d="M15 34a14 14 0 1 1 14 0"/><path d="M16.500 28.500a8.500 8.500 0 1 1 11 0"/></g><circle cx="22" cy="21.500" r="3.500" fill="#fff"/><path d="M18.500 27.500c0-2.500 7-2.500 7 0L24.300 36c-.4 2.500-4.200 2.500-4.600 0Z" fill="#fff"/></svg></button>
      <button class="d tv" aria-label="TV"><svg width="44" height="44" viewBox="0 0 44 44"><circle cx="22" cy="22" r="21.500" fill="#1c1c1e"/><g color="#fff"><use href="#apple" x="8" y="14" width="11" height="13.500"/></g><text x="20" y="27" font-size="16" font-weight="500" fill="#fff">tv</text></svg></button>
      <button class="d" aria-label="News"><svg width="44" height="44" viewBox="0 0 44 44"><circle cx="22" cy="22" r="21.500" fill="#eef1f3"/><path d="M10.500 11H18l16 16v6.500h-7.500L10.500 17.500ZM22.500 11H34v11.500ZM10.500 22L22 33.500H10.500Z" fill="#f5334f"/></svg></button>
      <button class="d" aria-label="App Store"><svg width="44" height="44" viewBox="0 0 44 44"><circle cx="22" cy="22" r="21.500" fill="url(#gBlue)"/><g stroke="#fff" stroke-width="3.200" stroke-linecap="round"><path d="M20 10l2 3.500M25 9.500L14 28.500M22 13.500L34 34M8.500 28.500h17M31 28.500h5M11.500 32.500l-1 1.500"/></g></svg><span class="badge">3</span></button>
      <button class="d" aria-label="System Preferences"><svg width="44" height="44" viewBox="0 0 44 44"><rect x="1" y="2" width="42" height="40" rx="2" fill="url(#gMetal)"/><circle cx="22" cy="22" r="18" fill="#3b3c3d"/><circle cx="22" cy="22" r="15" fill="none" stroke="#c2c4c4" stroke-width="3" stroke-dasharray="1.500 1"/><circle cx="22" cy="22" r="12.500" fill="#5a5b5b" stroke="#c4c5c5" stroke-width="2"/><circle cx="22" cy="22" r="3.500" fill="#c4c5c5"/><path d="M22 22h13M22 22L15.500 11M22 22l-6.500 11" stroke="#c4c5c5" stroke-width="2.800"/></svg><span class="badge">1</span></button>
    </div>
    <i class="rule"></i>
    <div class="apps a4">
      <button class="d run" aria-label="Word"><svg width="44" height="44" viewBox="0 0 44 44"><path d="M11 3h33v10H11z" fill="#2b9df2"/><path d="M11 13h33v9H11z" fill="#1c7ad6"/><path d="M11 22h33v10H11z" fill="#185abd"/><path d="M11 32h33v9H11z" fill="#123f98"/><rect x="1" y="11" width="22" height="22" rx="2" fill="#1a56c4"/><text x="4" y="27" font-size="15" font-weight="700" fill="#fff">W</text></svg></button>
      <button class="d" aria-label="System Information"><svg width="44" height="48" viewBox="0 0 44 48"><g fill="none" stroke="#bfc5ca" stroke-width="2.400"><circle cx="22" cy="4.500" r="3.300" stroke-width="1.500"/><path d="M21 9L17 19C8 22 2 30 5 36c1 3 3 4 6 5M23 9l4 10c9 3 15 11 12 17-1 3-3 4-6 5"/><path d="M28 15h12" stroke-width="1"/></g><path d="M20 7h4l3 12h-2L22 11l-3 8h-2Z" fill="#ccd1d4"/><path d="M15 30h15l2 10H13Z" fill="#35383b"/><path d="M15.500 40v7M19 40v7M22.500 40v7M26 40v7M29.500 40v7" stroke="#d4d7d9" stroke-width="1.500"/></svg></button>
      <button class="d run" aria-label="Excel"><svg width="44" height="44" viewBox="0 0 44 44"><path d="M11 3h17v10H11z" fill="#1fa463"/><path d="M28 3h16v10H28z" fill="#14c878"/><path d="M11 13h17v9H11z" fill="#107c41"/><path d="M28 13h16v9H28z" fill="#21a366"/><path d="M11 22h17v10H11z" fill="#185c37"/><path d="M28 22h16v10H28z" fill="#107c41"/><path d="M11 32h33v9H11z" fill="#0f5a33"/><rect x="1" y="11" width="22" height="22" rx="2" fill="#0d7a40"/><text x="7" y="27" font-size="15" font-weight="700" fill="#fff">X</text></svg></button>
      <button class="d run" aria-label="PowerPoint"><svg width="44" height="44" viewBox="0 0 44 44"><circle cx="25" cy="22" r="19" fill="#f06a3a"/><path d="M25 3a19 19 0 0 1 19 19H25Z" fill="#ff8f6b"/><path d="M6 22h38a19 19 0 0 1-38 0Z" fill="#e8470e"/><rect x="0" y="11" width="22" height="22" rx="2" fill="#cf3a1c"/><text x="6" y="27" font-size="15" font-weight="700" fill="#fff">P</text></svg></button>
    </div>
    <i class="rule"></i>
    <div class="apps"><button class="d" aria-label="Trash"><svg width="44" height="46" viewBox="0 0 44 46"><path d="M4 3h36l-4.500 39c-.5 3.500-26.500 3.500-27 0Z" fill="url(#gTrash)" opacity=".92"/><ellipse cx="22" cy="3.500" rx="18" ry="2.300" fill="#b9bdc1" stroke="#f7f7f7"/></svg></button></div>
  </div>
</nav>
</body>
</html>
```
FILE: styles.css
```css
* { box-sizing: border-box; }
html, body { height: 100%; }
body {
  margin: 0;
  display: flex;
  flex-direction: column;
  overflow: hidden;
  font-family: Inter, "Liberation Sans", sans-serif;
  color: #262626;
  background: linear-gradient(to bottom, #7f9dbb 0, #78b0e0 60px, #6fa9dc 150px, #a6c6df 230px, #c9d3df 277px, #4f8fbc 278px, #6ba0c4 340px, #5d8aae 440px, #33628c 520px, #16395a 600px, #0b2a44 100%);
}
button, input, select, textarea { font: inherit; color: inherit; border: 0; margin: 0; padding: 0; background: none; border-radius: 0; }
button { display: flex; align-items: center; justify-content: center; white-space: nowrap; }
svg { display: block; flex: none; }
.defs { position: absolute; width: 0; height: 0; }
.grow { flex: 1; }

/* menu bar */
.menubar { height: 23px; flex: none; display: flex; justify-content: space-between; align-items: center; background: linear-gradient(to right, #b2ddf4, #b9dcf1 60%, #dde7ee 90%); border-bottom: 1px solid #335d80; color: #10303f; font-size: 14px; }
.menus { display: flex; align-items: center; gap: 18px; padding-left: 21px; }
.menus .app { font-weight: 700; }
.menus svg { color: #10303f; }
.tray { display: flex; align-items: center; padding-right: 22px; }
.wifi { margin-left: 15px; }
.pct { font-size: 12px; margin-left: 12px; }
.batt { margin-left: 5px; }
.clock { margin-left: 19px; }
.t1 { margin-left: 22px; }
.siri { margin-left: 17px; }
.list { margin-left: 12px; }

/* windows on the desktop */
.desktop { position: relative; flex: 1; }
.back { position: absolute; left: 20px; right: 12px; top: 0; bottom: 69px; display: flex; flex-direction: column; border-radius: 5px 5px 6px 6px; overflow: hidden; background: #e6e6e6; }
.back-bar { height: 38px; flex: none; background: linear-gradient(to right, #f1f1f1, #f6f6f6); display: flex; justify-content: flex-end; padding: 7px 7px 7px 0; border-bottom: 1px solid #c4c4c4; }
.pill { width: 80px; border: 1px solid #d4d4d4; border-radius: 5px; display: flex; align-items: center; justify-content: flex-end; padding-right: 12px; }
.back-tabs { height: 24px; flex: none; background: #dcdcdc; display: flex; justify-content: flex-end; border-bottom: 1px solid #b9b9b9; }
.newtab { width: 25px; background: #cfcfcf; border-left: 1px solid #bdbdbd; }
.back-body { flex: 1; display: flex; background: linear-gradient(to right, #dcdcdc calc(100% - 36px), #e4e4e4 calc(100% - 24px), #eeeeee); }
.side { width: 200px; background: #1f1f1f; display: flex; align-items: flex-end; padding: 0 12px 13px; font: 12px/16px "Open Sans", sans-serif; }
.side a { color: #9b9b9b; text-decoration: none; }
.cards { flex: 1; display: flex; flex-direction: column; gap: 16px; padding-right: 30px; }
.cards i { height: 105px; flex: none; border: 1px solid #acacac; }
.cards .on { height: 107px; border: 2px solid #0b57a8; border-bottom: 0; }

.excel { position: absolute; left: 0; right: 47px; top: 0; bottom: 97px; display: flex; flex-direction: column; border-radius: 5px; overflow: hidden; background: #f2f2f2; box-shadow: 0 10px 26px rgba(0,0,0,.55), 0 0 1px #555; }
.grip { position: absolute; right: 42px; bottom: 94px; }

.titlebar { height: 32px; flex: none; display: flex; align-items: center; background: linear-gradient(#068850, #037342); border-top: 1px solid #4faa80; color: #e1f2ea; position: relative; }
.lights { display: flex; gap: 8px; padding-left: 13px; }
.lights button { width: 12px; height: 12px; border-radius: 50%; }
.lights .r { background: #ff4b42; }
.lights .y { background: #fdbb08; }
.lights .g { background: #0bd02c; }
.autosave { margin-left: 25px; display: flex; align-items: center; gap: 5px; font-size: 11px; font-weight: 600; }
.sw { position: relative; display: block; height: 14px; }
.sw input { appearance: none; display: block; width: 40px; height: 14px; border-radius: 7px; background: radial-gradient(circle at 33px 7px, #fff 6px, #c9e4d8 7px); }
.on-text { position: absolute; left: 9px; top: 0; font-size: 9px; line-height: 14px; font-weight: 700; color: #1b7d50; }
.quick { display: flex; align-items: center; gap: 9px; margin-left: 10px; }
.quick .w { margin: 0 1px 0 -5px; color: #fff; }
.quick button:last-child { margin-left: 5px; }
.quick button:nth-child(5) { margin-left: -2px; }
.doc { position: absolute; left: 50%; transform: translateX(-50%); display: flex; align-items: center; gap: 4px; font-size: 13px; font-weight: 500; white-space: nowrap; }
.saved { color: #74b797; }
.title-right { margin-left: auto; display: flex; gap: 16px; padding-right: 10px; color: #fff; }

.tabs { height: 33px; flex: none; display: flex; align-items: flex-start; gap: 25px; padding: 4px 10px 0 11px; background: #f5f5f5; }
.tab { height: 24px; font-size: 13px; font-weight: 500; color: #262626; border-bottom: 3px solid transparent; }
.tab.sel { font-weight: 700; border-color: #087a45; }
.tab.sel + .tab { margin-left: -1px; }
.tell { gap: 9px; margin-left: -9px; }
.act { height: 24px; gap: 4px; font-size: 12px; font-weight: 700; color: #087a45; background: #fff; border: 1px solid #d6d6d6; border-radius: 3px; padding: 0 7px; }
.comm { margin-left: -15px; }

/* ribbon */
.ribbon { height: 72px; flex: none; display: flex; padding-top: 1px; background: linear-gradient(#f3f3f3, #ededed); border-bottom: 1px solid #c6c6c6; color: #a2a2a2; }
.grp { height: 63px; flex: none; display: flex; flex-direction: column; border-right: 1px solid #cfcfcf; padding-top: 1px; }
.g1, .g6, .g8, .g9, .g10 { flex-direction: row; }
.g1 { width: 105px; padding-left: 17px; }
.g2 { width: 270px; padding-left: 10px; }
.g3 { width: 162px; padding-left: 9px; }
.g4 { width: 55px; padding-left: 12px; }
.g5 { width: 176px; padding-left: 10px; }
.g6 { width: 183px; padding-left: 12px; gap: 7px; }
.g7 { width: 97px; padding: 0 0 0 13px; }
.g8 { width: 155px; padding-left: 13px; }
.g9 { width: 57px; justify-content: center; }
.g10 { padding-left: 12px; border: 0; }
.dark { color: #262626; }
.big { flex-direction: column; justify-content: flex-start; font-size: 11px; line-height: 12px; color: #8b8b8b; height: 62px; }
.big.dark { color: #1c1c1c; font-weight: 500; }
.g1 .big { width: 38px; }
.pic { height: 38px; display: flex; align-items: center; gap: 4px; color: #a2a2a2; }
.dark .pic { color: #262626; }
.g1 .pic { padding-left: 2px; gap: 3px; }
.g10 .pic { padding-left: 2px; }
.stack { display: flex; flex-direction: column; padding-left: 6px; }
.stack button { height: 21px; flex: none; justify-content: flex-start; }
.g1 .stack { padding-left: 8px; }
.g1 .stack button:not(.cp) { width: 16px; justify-content: center; }
.g1 .stack button { gap: 5px; }
.g8 .two { padding: 0 2px 0 0; color: #262626; }
.g8 .two button { height: 22px; gap: 6px; }
.row { height: 31px; display: flex; align-items: center; gap: 6px; }
.row select { appearance: none; height: 24px; width: 140px; opacity: 1; background: #fff url("data:image/svg+xml,%3Csvg xmlns='http://www.w3.org/2000/svg' width='8' height='6'%3E%3Cpath d='M1.500 1.500L4 4.200L6.500 1.500' fill='none' stroke='%23666' stroke-width='1.500'/%3E%3C/svg%3E") no-repeat right 3px center; border: 1px solid #dedede; border-radius: 3px; }
.fonts { gap: 3px; }
.fonts select + select { width: 54px; }
.fonts button { width: 24px; }
.g5 .row select { width: 155px; }
.style { display: grid; grid-template-columns: 24px 26px 26px 12px 16px 26px 11px 16px 25px 12px 26px 10px; gap: 0; justify-items: center; font-size: 15px; }
.b { font-weight: 700; }
.i { font-style: italic; font-family: "Liberation Serif", serif; font-size: 17px; }
.u { text-decoration: underline; }
.sep { width: 1px; height: 18px; background: #d2d2d2; }
.al { display: grid; grid-template-columns: 26px 26px 26px 14px 28px 24px; gap: 0; justify-items: center; color: #9d9d9d; }
.al .start { justify-self: start; }
.num { display: grid; grid-template-columns: 22px 16px 24px 28px 12px 26px 28px; gap: 0; justify-items: center; font-size: 18px; }
.dk { color: #262626; }
.g6 .big { width: 56px; }
.g6 .big + .big { width: 44px; }
.g6 .pic { gap: 3px; }
.line { height: 22px; flex: none; gap: 7px; justify-content: flex-start; font-size: 11px; font-weight: 500; color: #262626; }
.g8 .big { width: 50px; }

/* formula bar */
.formula { height: 67px; flex: none; display: flex; background: #fdfdfd; border-bottom: 1px solid #b0b0b0; position: relative; }
.fleft { width: 181px; display: flex; flex-direction: column; }
.frow { height: 26px; display: flex; align-items: center; background: #fff; }
.namebox { width: 86px; height: 26px; border: 1px solid #b5b5b5; border-width: 1px 1px 0 1px; display: flex; align-items: center; justify-content: space-between; padding: 0 5px 0 9px; background: #fff; }
.namebox input { width: 50px; font-size: 12px; }
.frow button { width: 29px; }
.frow button:nth-child(2) { margin-left: 5px; }
.frow .fx { font: italic 18px "Liberation Serif", serif; color: #444; width: 34px; }
.fblank { flex: 1; background: #f3f3f3; border: 1px solid #b0b0b0; border-left: 0; margin-bottom: 2px; }
.formula textarea { flex: 1; resize: none; margin-bottom: 2px; border-bottom: 1px solid #b0b0b0; outline: 0; }
.fold { width: 16px; height: 28px; margin-bottom: 2px; }
.formula::after { content: ""; position: absolute; right: 0; bottom: 2px; width: 16px; border-bottom: 1px solid #b0b0b0; }

/* grid */
.sheet { flex: 1; min-height: 0; overflow: hidden; background: #fff; }
table { width: 100%; table-layout: fixed; border-collapse: separate; border-spacing: 0; font: 17px/19px "Liberation Serif", serif; }
.ch { width: 31px; } .ca { width: 258px; } .cb { width: 176px; } .cc { width: 165px; } .cf { width: 76px; }
th { font: 16px/18px "Liberation Sans", sans-serif; color: #555; padding: 0; border-right: 1px solid #b5b5b5; border-bottom: 1px solid #e2e2e2; background: linear-gradient(to right, #fff, #f5f5f5); height: 22px; vertical-align: middle; }
thead th { height: 31px; background: linear-gradient(#fdfdfd, #f5f5f5); border-right-color: #dcdcdc; border-bottom-color: #b8b8b8; }
thead th:first-child { border-right-color: #b5b5b5; }
thead th:last-child { border-right: 0; }
thead th svg { margin-left: 4px; }
.cur { color: #087a45; font-weight: 700; }
thead .cur { background: #f0f0f0; border-bottom: 2px solid #087a45; font-weight: 400; }
tbody .cur { border-right: 2px solid #087a45; background: #efefef; }
td { padding: 0 3px; border: 0 solid #cfcfcf; border-width: 0 1px 1px 0; white-space: nowrap; color: #000; vertical-align: middle; position: relative; }
td:last-child { border-right: 0; }
.tall th { height: 25px; }
.it, .unit { font-size: 18px; }
.it, td em { font-style: italic; }
.over td:nth-child(-n+4) { border-bottom-color: #000; }
.fall { background: #ffeb8f; border-color: #ffeb8f; color: #a85b00; font: 13px/18px "Open Sans", sans-serif; padding: 0 2px; }
.err, .warn, .q { font-weight: 700; }
.err, .warn { color: #fb0007; }
.warn { background: #ffeb8f; border-color: #ffeb8f; }
.head td:nth-child(-n+4) { background: #3f6bcb; color: #fff; font-size: 18px; font-weight: 700; text-align: center; border-color: #000; }
.head td:nth-child(4) { border-right-color: #3f6bcb; }
.head em { margin-right: 4px; }
sub { font-size: 13px; line-height: 1px; vertical-align: -4px; margin-left: 2px; }
.data td:nth-child(2) { background: #ffeb8f; color: #a85b00; text-align: right; border-color: #000; }
.data td:nth-child(3) { background: #bdf3cd; color: #006a06; text-align: center; border-color: #000; }
.data td:nth-child(4) { background: #bdf3cd; border-color: #bdf3cd; border-bottom-color: #000; }
.nr { border-right-color: #ffeb8f; }
.inp { background: #ffeb8f; color: #a85b00; text-align: right; border-color: #ffeb8f; }
.line-b { border-bottom-color: #000; }
.one { padding-right: 5px; }
.sans { font: 14px/18px "Open Sans", sans-serif; padding-right: 2px; }
.ans { background: #bdf3cd; }
.active::after { content: ""; position: absolute; inset: -2px; border: 2px solid #0b7a45; }
.active::before { content: ""; position: absolute; right: -4px; bottom: -4px; width: 7px; height: 7px; background: #0b7a45; border: 1px solid #fff; z-index: 1; }

/* sheet tabs and status */
.sheetbar { height: 27px; flex: none; display: flex; align-items: center; background: #efefef; border-top: 1px solid #cdcdcd; border-bottom: 1px solid #999; }
.arr { width: 23px; }
.arr:first-child { margin-left: 7px; }
.stab { align-self: flex-start; width: 94px; height: 23px; margin-left: 7px; gap: 6px; font-size: 12px; font-weight: 700; color: #0a8a50; background: #fff; border: 1px solid #c6c6c6; border-top: 0; border-bottom: 2px solid #aaa; border-radius: 0 0 3px 3px; }
.add { width: 38px; height: 22px; border-right: 1px solid #cbcbcb; align-self: flex-start; }
.status { height: 22px; flex: none; display: flex; align-items: center; background: linear-gradient(#e6e6e6, #d3d3d3); font-size: 12px; color: #555; padding: 0 23px 0 24px; }
.view { width: 36px; height: 22px; }
.view.sel { background: #a0a0a0; }
.zb { width: 12px; margin: 0 6px; }
.status input { appearance: none; width: 98px; height: 4px; border-radius: 2px; background: #9d9d9d; }
.status input::-webkit-slider-thumb { appearance: none; width: 12px; height: 12px; border-radius: 50%; background: #fff; box-shadow: 0 0 1px #555; }
.zoom { margin-left: 9px; }

/* dock */
.dock { position: absolute; left: 44px; right: 44px; bottom: 0; height: 66px; display: flex; gap: 2px; }
.shelf { background: linear-gradient(to right, #3f648f, #45678a); border-radius: 5px 5px 0 0; }
.handoff { width: 59px; flex: none; display: flex; background: #3f658f; }
.main { flex: 1; display: grid; grid-template-columns: 18fr 23px 4fr 23px 1fr; padding: 0 4px 0 1px; }
.apps { display: flex; min-width: 0; }
.d { flex: 1; min-width: 0; height: 66px; padding-bottom: 4px; position: relative; }
.petals rect { mix-blend-mode: multiply; }
.run::after { content: ""; position: absolute; left: calc(50% - 2px); bottom: 2px; width: 4px; height: 4px; border-radius: 50%; background: #0a0a0a; }
.rule { width: 1px; height: 48px; margin: 9px auto 0; background: #1f3f63; }
.badge { position: absolute; right: 2px; top: 6px; min-width: 18px; height: 18px; border-radius: 9px; background: #f5101c; color: #fff; font-size: 11px; line-height: 18px; text-align: center; }
.wide { right: 0; width: 31px; font-size: 10px; }
```
